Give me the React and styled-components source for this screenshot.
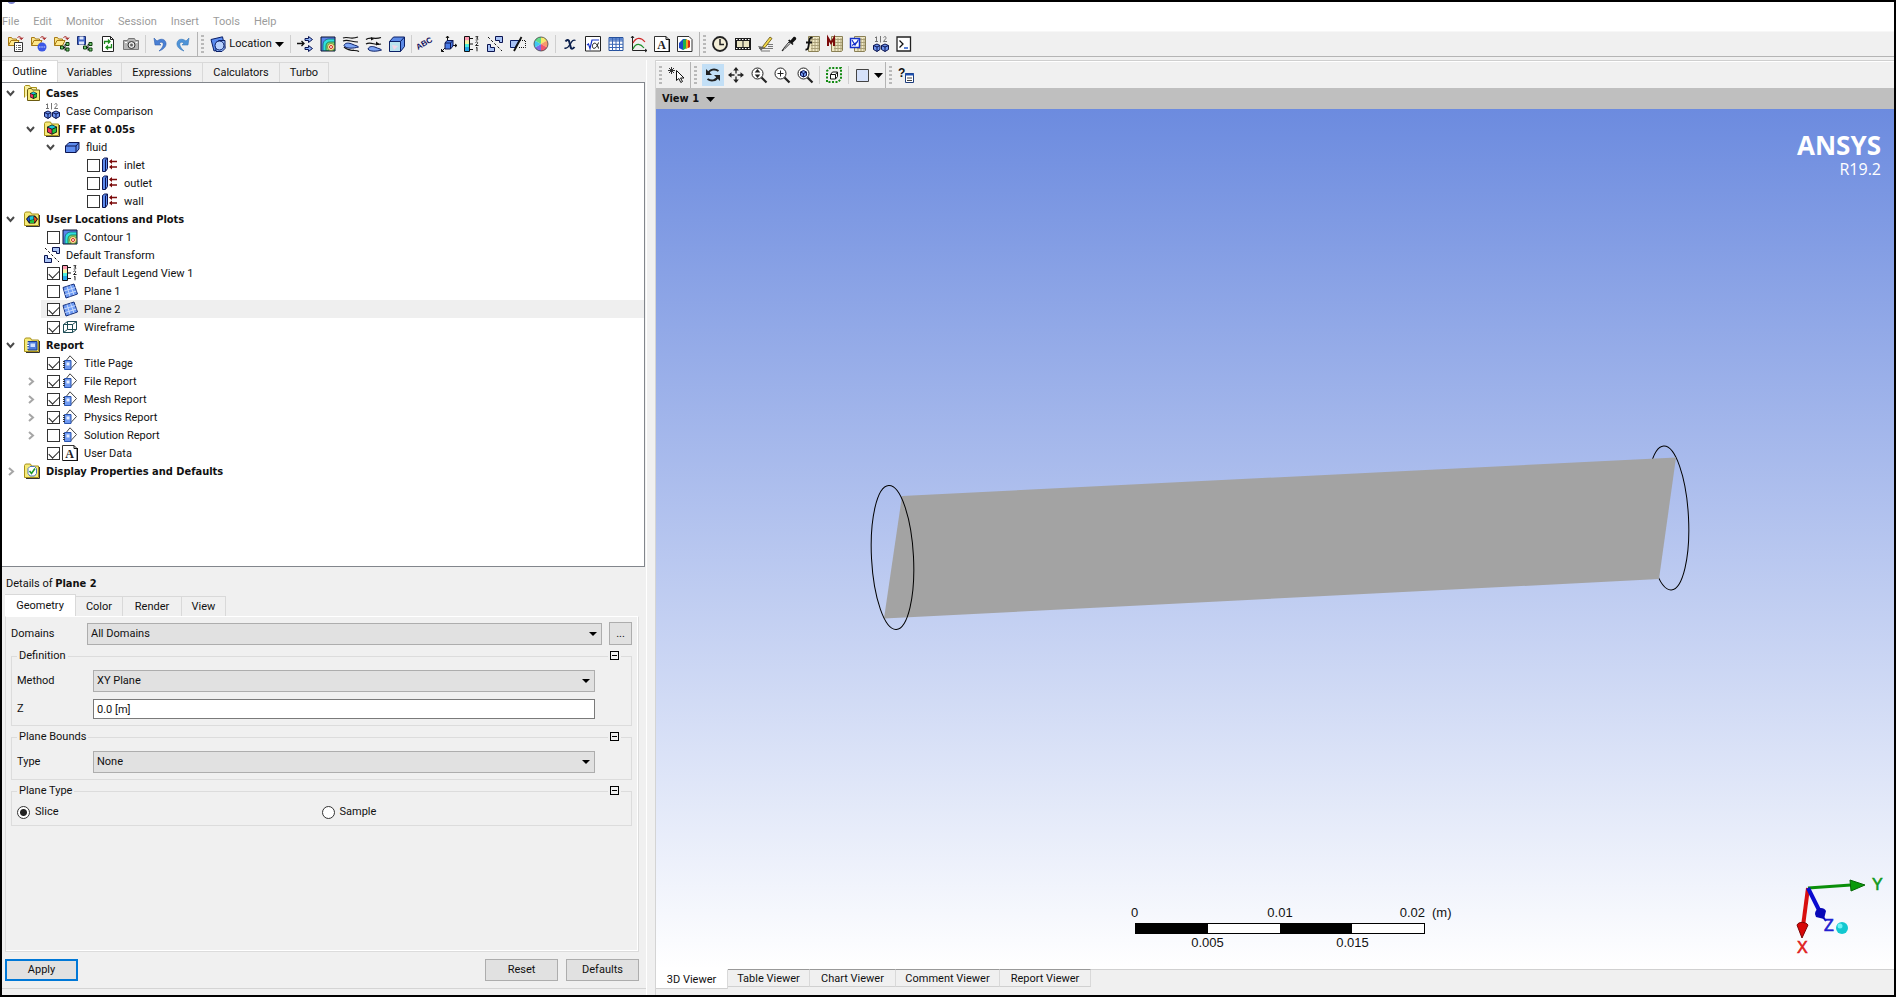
import React, { useState } from "react"
import styled, { createGlobalStyle, css } from "styled-components"

const GlobalStyle = createGlobalStyle`
  * {
    box-sizing: border-box;
  }
  body {
    margin: 0;
    font-family: Roboto, "Noto Sans", sans-serif;
    font-size: 11px;
    line-height: 16px;
    color: #111;
  }
  button, input, select {
    font: inherit;
    color: inherit;
    margin: 0;
  }
  svg {
    display: block;
    flex: none;
    overflow: visible;
  }
`

const bold = css`
  font-family: "DejaVu Sans Condensed", "DejaVu Sans", sans-serif;
  font-weight: bold;
`

const Window = styled.div`
  height: 100vh;
  min-height: 900px;
  display: flex;
  flex-direction: column;
  border: 2px solid #000;
  background: #f0f0f0;
  overflow: hidden;
`

const MenuBar = styled.nav`
  flex: none;
  height: 29px;
  display: flex;
  align-items: center;
  gap: 14px;
  padding-top: 10px;
  background: #fff;
  position: relative;
`

const TitleIcon = styled.span`
  position: absolute;
  left: 5px;
  top: -7px;
  width: 9px;
  height: 9px;
  border-radius: 50%;
  background: #7f86cf;
`

const MenuItem = styled.button`
  border: 0;
  padding: 0;
  background: none;
  color: #9c9c9c;
`

const ToolBar = styled.div`
  flex: none;
  display: flex;
  height: 26px;
  border-top: 1px solid #f7f7f7;
  border-bottom: 1px solid #b4b4b4;
`

const ViewToolBar = styled(ToolBar)`
  height: 27px;
  border-top: 1px solid #fff;
  border-bottom: 0;
`

const ToolGroup = styled.div`
  display: flex;
  align-items: center;
  gap: 7px;
  padding: 0 ${props => (props.$tail === undefined ? 6 : props.$tail)}px 0
    ${props => (props.$lead === undefined ? 6 : props.$lead)}px;
`

const Grip = styled.span`
  flex: none;
  align-self: center;
  width: 3px;
  height: 18px;
  margin-left: 3px;
  background: repeating-linear-gradient(#b9b9b9 0 2px, #f0f0f0 2px 4px);
`

const GroupEnd = styled.span`
  flex: none;
  width: 1px;
  background: #b4b4b4;
`

const Separator = styled.span`
  width: 1px;
  height: 18px;
  margin: 0 -1px;
  background: #cfcfcf;
`

const ToolButton = styled.button`
  display: flex;
  align-items: center;
  gap: 3px;
  height: 22px;
  padding: 0 ${props => (props.$active ? 3 : 0)}px;
  margin: 0 ${props => (props.$active ? -3 : 0)}px;
  border: 0;
  background: ${props => (props.$active ? "#c2dff6" : "none")};
  white-space: nowrap;
`

const LocationButton = styled(ToolButton)`
  width: 74px;
  justify-content: space-between;
`

const Main = styled.div`
  flex: 1;
  min-height: 0;
  display: flex;
  padding-top: 3px;
`

const SidePanel = styled.div`
  flex: 0 0 645px;
  display: flex;
  flex-direction: column;
  border-right: 1px solid #fff;
`

const Splitter = styled.div`
  flex: 0 0 9px;
  border-right: 1px solid #d4d4d4;
`

const Tabs = styled.div`
  flex: none;
  display: flex;
  align-items: flex-end;
`

const Tab = styled.button`
  width: ${props => props.$w}px;
  height: ${props => (props.$active ? 22 : 20)}px;
  padding: 0;
  border: 0;
  border-top: 1px solid #d9d9d9;
  border-right: 1px solid #d9d9d9;
  background: ${props => (props.$active ? "#fff" : "#f0f0f0")};
`

const ViewerTab = styled(Tab)`
  height: ${props => (props.$active ? 20 : 18)}px;
  padding-top: 2px;
  line-height: 14px;
  border-top: 1px solid ${props => (props.$active ? "#fff" : "#999")};
  border-bottom: 1px solid #d0d0d0;
`

const Tree = styled.ul`
  flex: 1;
  min-height: 0;
  margin: 0 1px 0 0;
  padding: 1px 0 0;
  list-style: none;
  overflow: hidden;
  background: #fff;
  border: 1px solid #82868c;
  border-left: 0;
`

const TreeRow = styled.li`
  display: flex;
  height: 18px;
  padding-left: ${props => props.$level * 20}px;
`

const Toggle = styled.button`
  flex: none;
  width: 19px;
  padding: 0 0 0 4px;
  border: 0;
  background: none;
`

const ToggleSpace = styled.span`
  flex: none;
  width: 19px;
`

const RowBody = styled.span`
  flex: 1;
  display: flex;
  align-items: center;
  gap: 6px;
  padding-left: 3px;
  line-height: 18px;
  white-space: nowrap;
  background: ${props => (props.$selected ? "#efefef" : "none")};
  ${props => props.$bold && bold}
`

const RowText = styled.span`
  padding-top: 1px;
`

const CheckBox = styled.input`
  appearance: none;
  flex: none;
  position: relative;
  width: 13px;
  height: 13px;
  margin: 0 -4px 0 3px;
  border: 1px solid #333;
  background: #fff;
  &:checked::after {
    content: "";
    position: absolute;
    left: 1px;
    top: 2px;
    width: 9px;
    height: 5px;
    border-left: 1px solid #222;
    border-bottom: 1px solid #222;
    transform: rotate(-45deg);
  }
`

const Details = styled.section`
  flex: 0 0 428px;
  display: flex;
  flex-direction: column;
  padding: 7px 7px 0 3px;
`

const DetailsTitle = styled.h2`
  margin: 0 0 2px;
  padding: 2px 1px 0;
  font-size: 11px;
  font-weight: normal;
  line-height: 16px;
  strong {
    ${bold}
  }
`

const Pane = styled.div`
  flex: 1;
  display: flex;
  flex-direction: column;
  gap: 3px;
  padding: 5px 6px 0 5px;
  border: 1px solid #dcdcdc;
  border-top-color: #fff;
  box-shadow: inset -1px 0 #fff, inset 0 -1px #fff;
`

const Field = styled.div`
  display: flex;
  align-items: center;
  padding-right: ${props => (props.$inset ? 31 : 0)}px;
  & + & {
    margin-top: 7px;
  }
`

const FieldLabel = styled.label`
  flex: 0 0 76px;
`

const SelectBox = styled.div`
  flex: 1;
  position: relative;
  height: 22px;
`

const Select = styled.select`
  appearance: none;
  width: 100%;
  height: 100%;
  padding: 0 3px;
  border: 1px solid #adadad;
  border-radius: 0;
  background: #e1e1e1;
`

const SelectArrow = styled.span`
  position: absolute;
  right: 5px;
  top: 9px;
  border: 4px solid transparent;
  border-top-color: #000;
  border-bottom: 0;
  pointer-events: none;
`

const TextInput = styled.input`
  flex: 1;
  height: 20px;
  padding: 0 3px;
  border: 1px solid #7a7a7a;
  background: #fff;
`

const MoreButton = styled.button`
  width: 23px;
  height: 23px;
  margin-left: 7px;
  padding: 0;
  border: 1px solid #adadad;
  background: #e1e1e1;
`

const Group = styled.fieldset`
  position: relative;
  min-width: 0;
  margin: 0;
  padding: 6px 5px;
  border: 1px solid #dcdcdc;
`

const Legend = styled.legend`
  height: 16px;
  padding: 0 2px;
`

const Collapse = styled.button`
  position: absolute;
  right: 12px;
  top: -13px;
  width: 9px;
  height: 9px;
  padding: 0;
  border: 1px solid #000;
  background: linear-gradient(#000, #000) center / 5px 1px no-repeat #f0f0f0;
  outline: 2px solid #f0f0f0;
`

const RadioRow = styled.div`
  display: grid;
  grid-template-columns: 1fr 1fr;
  line-height: 14px;
`

const RadioLabel = styled.label`
  display: flex;
  align-items: center;
  gap: 5px;
`

const Radio = styled.input`
  appearance: none;
  width: 13px;
  height: 13px;
  border: 1px solid #333;
  border-radius: 50%;
  background: #fff;
  &:checked {
    background: radial-gradient(#222 0 3px, #fff 4px);
  }
`

const ButtonRow = styled.div`
  flex: none;
  display: flex;
  gap: 8px;
  margin-top: 7px;
`

const PushButton = styled.button`
  width: 73px;
  height: 22px;
  padding: 0;
  background: #e1e1e1;
  border: ${props => (props.$primary ? "2px solid #0078d7" : "1px solid #adadad")};
  margin-right: ${props => (props.$primary ? "auto" : "0")};
`

const PanelFoot = styled.div`
  flex: none;
  height: 7px;
  margin: 7px -7px 0 -3px;
  border-top: 1px solid #d4d4d4;
`

const ViewPanel = styled.div`
  flex: 1;
  min-width: 0;
  display: flex;
  flex-direction: column;
  border-top: 1px solid #cfcfcf;
`

const ViewHeader = styled.div`
  flex: none;
  display: flex;
  align-items: center;
  gap: 7px;
  height: 21px;
  padding: 1px 0 0 6px;
  background: #bfbfbf;
  ${bold}
`

const Viewport = styled.div`
  flex: 1;
  min-height: 0;
  position: relative;
  background: linear-gradient(#6c8bdf, #fff);
`

const Scene = styled.svg`
  width: 100%;
  height: 100%;
`

const Brand = styled.div`
  position: absolute;
  right: 13px;
  top: 21px;
  display: flex;
  flex-direction: column;
  align-items: flex-end;
  color: #fff;
  font-family: "Open Sans", sans-serif;
`

const BrandName = styled.span`
  font-size: 26px;
  line-height: 30px;
  font-weight: 700;
`

const BrandRelease = styled.span`
  font-size: 16px;
  line-height: 18px;
`

const Ruler = styled.div`
  position: absolute;
  left: 50%;
  bottom: 18px;
  width: 290px;
  margin-left: -140px;
  font-family: "Liberation Sans", Arial, sans-serif;
  font-size: 13px;
  line-height: 16px;
`

const TopMarks = styled.div`
  display: grid;
  grid-template-columns: 1fr auto 1fr;
  padding-bottom: 2px;
  span:first-child {
    margin-left: -4px;
  }
  span:last-child {
    text-align: right;
  }
`

const BottomMarks = styled.div`
  display: grid;
  grid-template-columns: 1fr 1fr;
  padding-top: 1px;
  text-align: center;
`

const RulerBar = styled.div`
  display: grid;
  grid-template-columns: repeat(4, 1fr);
  height: 11px;
  border: 1px solid #000;
`

const RulerCell = styled.span`
  background: ${props => (props.$dark ? "#000" : "#fff")};
`

const RulerUnit = styled.span`
  position: absolute;
  left: 297px;
  top: 0;
`

const Triad = styled.svg`
  position: absolute;
  right: 7px;
  bottom: 13px;
`

const ViewerFoot = styled.div`
  flex: none;
  display: flex;
  align-items: flex-start;
  height: 26px;
  box-shadow: inset 0 1px #d0d0d0;
`

const Caret = () => (
  <svg width="9" height="5" viewBox="0 0 9 5">
    <path d="M0 0h9L4.500 5z" fill="#000" />
  </svg>
)

const Chevron = ({ open }) => (
  <svg width="9" height="9" viewBox="0 0 9 9" fill="none" strokeWidth="2">
    {open ? (
      <path d="M1 2l3.500 4L8 2" stroke="#4a4a4a" />
    ) : (
      <path d="M3 1l4 3.500L3 8" stroke="#a6a6a6" />
    )}
  </svg>
)

// shared pieces of the 16px glyphs
const openFolder = (
  <>
    <path d="M.5 9.500v-8h3l1 1.500h4v2" fill="#fbe58a" stroke="#a87a14" />
    <path d="M.5 9.500l2.500-5h8l-2.500 5z" fill="#ffe98c" stroke="#a87a14" />
    <path d="M9.500 1.500c2-1.500 3.500-1 4 1.500M11.500 2l2 1.500L15 1.500" fill="none" stroke="#a01010" />
  </>
)
const nodes = (
  <>
    <path d="M9 11.500h2M11 8.500v6M11 8.500h1M11 13.500h1" stroke="#111" fill="none" />
    <path d="M6.500 10h3v3h-3zM12 6.500h3v3h-3zM12 12h3v3h-3z" fill="#6fc36f" stroke="#0d3d0d" />
  </>
)
const yellowFolder = (
  <>
    <path d="M2 15.500h13.500V4" stroke="#333" fill="none" />
    <path d="M.5 14.500v-12l1-1.500h5l1 2h7v11.500z" fill="#f5ea78" stroke="#a89118" />
  </>
)
const cube = (
  <>
    <path d="M8 3.500l5 2.300v5.400L8 13.800l-5-2.600V5.800z" fill="#111" />
    <path d="M8 4.300l4 1.700L8 7.800 4 6z" fill="#1cc9d6" />
    <path d="M3.700 6.700L7.600 8.500v4.200L3.700 10.800z" fill="#f0305e" />
    <path d="M12.300 6.700L8.400 8.500v4.200l3.900-1.900z" fill="#22c03c" />
  </>
)
const compare = (
  <>
    <path d="M.5 9.500L4 8l3 1.500v4L4 15.500l-3.500-2zM8.500 9.500L12 8l3.500 1.500v4L12 15.500l-3.500-2z" fill="#6d93ee" stroke="#0b1450" />
    <path d="M.5 9.500L4 11l3-1.500M4 11v4.500M8.500 9.500L12 11l3.500-1.500M12 11v4.500" stroke="#0b1450" fill="none" />
    <path d="M3.500.5v5M2 1.500h1.500M2 5.500h3M7.500 0v6.500M10.500 1.500c1-1.500 3-1 2.500.8L10.500 5.500h3.500" stroke="#666" fill="none" strokeWidth=".9" />
  </>
)
const gridSheet = (
  <>
    <path d="M4.500.5h11v14l-1 1h-10z" fill="#efe8c4" stroke="#8a8055" />
    <path d="M7 3.500h8M7 6.500h8M7 9.500h8M7 12.500h8M8 2v13M11 2v13M14 2v13" stroke="#aaa078" />
  </>
)
const magnifier = (
  <>
    <circle cx="6.500" cy="6.500" r="5.500" fill="#fff" stroke="#222" />
    <path d="M10.500 10.500l5 5" stroke="#222" strokeWidth="2.200" />
  </>
)
const contour = (
  <>
    <path d="M1 1h14v14H1z" fill="#5a84ea" stroke="#0a1030" />
    <path d="M3 14.500V9c0-4 3-6 6-6h5.500v11.500z" fill="#2fe0dc" stroke="#0a4050" strokeWidth=".6" />
    <path d="M6 14.500V10c0-3 2-4 4-4h4.500v8.500z" fill="#7ce07a" stroke="#0a4020" strokeWidth=".6" />
    <circle cx="11" cy="11" r="3.500" fill="#fdf3a0" stroke="#665010" strokeWidth=".6" />
    <circle cx="11" cy="11" r="1.500" fill="#fff" stroke="#d02020" />
  </>
)
const legend = (
  <>
    <path d="M1 1h4v3.500H1z" fill="#ff9ab0" />
    <path d="M1 4.500h4V8H1z" fill="#f4f3a0" />
    <path d="M1 8h4v3H1z" fill="#4df0e0" />
    <path d="M1 11h4v4H1z" fill="#26a6e8" />
    <path d="M.5.5h5v15h-5zM6 2.500h3M6 8h3M6 13.500h3" fill="none" stroke="#111" />
    <path d="M11.500.7h2.500L12.700 2.300c2 0 1.700 2.200-1 1.700M11.500 6.500c1-1.200 2.800-.3 2 1L11.500 9.500h3M12 12l1-.7v4" fill="none" stroke="#222" />
  </>
)
const transform = (
  <>
    <path d="M8.500.5h7v6h-3v-2h-4z" fill="#a9c3f5" stroke="#0b1450" />
    <path d="M.5 8.500h3v3h4v4h-7z" fill="#a9c3f5" stroke="#0b1450" />
    <path d="M1 1l14 14" stroke="#111" strokeDasharray="2.500 2" />
  </>
)
const textSheet = (
  <>
    <path d="M.5.500h11.500l3 3v12H.5z" fill="#fff" stroke="#333" />
    <path d="M12 .5v3h3M15.500 3v13M1 15.500h14" stroke="#111" fill="none" />
    <text x="7.500" y="12.500" fontSize="12" fontWeight="bold" textAnchor="middle" fontFamily="Liberation Serif, serif" fill="#222">A</text>
  </>
)
const plane = (
  <>
    <path d="M1 4.500L12 1l3.500 10L4 15z" fill="#6f9cf4" stroke="#16307c" />
    <path d="M2 8l11.500-3.500M3 11.500L14.500 8M5 3.500L8 13.500M8.500 2.300L12 12" stroke="#dbe7ff" strokeWidth=".8" />
  </>
)
const boundary = (
  <>
    <path d="M.5 2.500L2.500 1h3v10.500L3.500 14.500h-3z" fill="#5e8cee" stroke="#0b1450" />
    <path d="M3.500 3v11M3.500 3l2-2" stroke="#0b1450" fill="none" />
    <path d="M8 4.500h7M8 10h7" stroke="#7c0a0a" strokeWidth="1.400" />
    <path d="M7 4.500l3-2.500v5zM7 10l3-2.500v5z" fill="#7c0a0a" />
  </>
)
const reportPage = (
  <>
    <path d="M8 .8L14.500 7.500 8.500 14 3 7z" fill="#fff" stroke="#444" />
    <path d="M2.500 5.500h6.500v9H2.500z" fill="#6f9af2" stroke="#2a55b0" />
    <path d="M4.500 7.500h3v3h-3z" fill="#e6eeff" />
    <path d="M1 6.500h2M1 8.500h2M1 10.500h2M1 12.500h2" stroke="#333" />
  </>
)

const glyphs = {
  openDoc: (
    <>
      {openFolder}
      <path d="M6.500 6.500h8v9h-8z" fill="#fff" stroke="#333" />
      <path d="M8 9.500h5M8 11.500h5M8 13.500h5" stroke="#666" strokeDasharray="1 1 3" />
    </>
  ),
  openState: (
    <>
      {openFolder}
      <circle cx="11" cy="11" r="4.500" fill="#3b57e6" />
      <path d="M8 11h1.500M10.300 11h1.500M12.600 11h1.500" stroke="#cdd6ff" />
    </>
  ),
  openTree: <>{openFolder}{nodes}</>,
  saveTree: (
    <>
      <path d="M.5.5h8v8h-8z" fill="#4468c8" stroke="#1c2f73" />
      <path d="M2.500.5h4v3h-4zM2 5.500h5v3H2z" fill="#dfe7fb" />
      {nodes}
    </>
  ),
  refresh: (
    <>
      <path d="M2.500.5h8l3 3v12h-11z" fill="#fff" stroke="#222" />
      <path d="M10.500.5v3h3" fill="none" stroke="#222" />
      <path d="M4.500 8V5.500h5M8 3.500l2 2-2 2M11.500 8v3.500h-5M8 9.500l-2 2 2 2" fill="none" stroke="#1b8a1b" strokeWidth="1.300" />
    </>
  ),
  camera: (
    <>
      <path d="M.5 4.500h4l1-2h6l1 2h3v9H.5z" fill="#b5b5b5" stroke="#777" />
      <circle cx="8.500" cy="9" r="3.500" fill="#e9e9e9" stroke="#333" />
      <circle cx="8.500" cy="9" r="1.500" fill="#666" />
      <path d="M2 6.500h2M12.500 6.500h2" stroke="#fff" />
    </>
  ),
  undo: <path d="M2 2l1 7h6L7 7c3-2 5 0 4 2.500-.5 2-2 3.500-4 5.500 5-1.500 7.500-5 7-8-.7-4-5-5-9-2z" fill="#4a80d4" stroke="#2f5fb0" strokeWidth=".6" />,
  redo: <path d="M14 2l-1 7H7l2-2C6 5 4 7 5 9.500c.5 2 2 3.500 4 5.500-5-1.500-7.500-5-7-8 .7-4 5-5 9-2z" fill="#4f94d8" stroke="#3a78bb" strokeWidth=".6" />,
  location: (
    <>
      <path d="M1 3.500L12.500.8l2.500 11L4 15z" fill="#5a8bf0" stroke="#0b1f66" />
      <path d="M6 6.500l3-2h6v8l-3 3H6z" fill="#8fb4fa" stroke="#0b1f66" />
      <circle cx="9.500" cy="9.500" r="4.500" fill="#b9d2ff" stroke="#0b1f66" />
    </>
  ),
  vector: (
    <>
      <path d="M0 7.500h7M4.500 5l2.500 2.500L4.500 10" fill="none" stroke="#111" strokeWidth="1.300" />
      <path d="M8 2.500h3.500V.5l4 3-4 3v-2H8zM8 11.500h3.500v-2l4 3-4 3v-2H8z" fill="#8fb4fa" stroke="#0b1450" />
    </>
  ),
  contour,
  streamline: (
    <>
      <path d="M0 2c5-2 7 2 15-1M0 5c5-2 8 1 15 1M6 13.500c4 2 7 0 10 2M1 11c2 2 7 4 10 3" fill="none" stroke="#111" strokeWidth="1.200" />
      <path d="M1 9.500C2 6.500 6 6.500 10 8.500c2 1 4 1 5.500 2.500-5 1.500-13 2-14.500-1.500z" fill="#7ea6f5" stroke="#0b1f66" />
    </>
  ),
  particle: (
    <>
      <path d="M0 3.500C4 0 8 4 15 1.500M0 8c5-3 9 2 15 0" fill="none" stroke="#111" strokeWidth="1.200" />
      <path d="M5 1l3 2-3 1.500zM10 5.500L13.500 8 10 9.500z" fill="#111" />
      <path d="M2 13c1-3 5-3 8-1.500 2 1 4 1 5.500 2.500-4 1.500-12 2-13.500-1z" fill="#7ea6f5" stroke="#0b1f66" />
    </>
  ),
  volume: (
    <>
      <path d="M.5 5.500l4-4.500h11v9.500l-4 5H.5z" fill="#5c8ae6" stroke="#0b1f66" />
      <path d="M1 6h10v9H1z" fill="#b9e2ee" />
      <path d="M3 9l6 1-4 4z" fill="#f4d6e6" />
      <path d="M11.500 15.500v-10h-11M11.500 5.500l4-4.500" stroke="#0b1f66" fill="none" />
    </>
  ),
  label: (
    <text x="0" y="14" fontSize="8" fontWeight="bold" fontFamily="Liberation Sans, sans-serif" fill="#10105c" transform="rotate(-30 0 14)">ABC</text>
  ),
  coord: (
    <>
      <path d="M6.500 0v5M5 2L6.500 0 8 2M11 9.500h5M14 8l2 1.500-2 1.500M5 11l-4.500 4.500M.5 13v2.500H3" fill="none" stroke="#111" />
      <path d="M4 7l2-2.500h6V10l-2.500 3H4z" fill="#4a7be6" stroke="#0b1450" />
      <path d="M4 7h5.500v6M9.500 7L12 4.500" stroke="#0b1450" fill="none" />
    </>
  ),
  legend,
  transform,
  clip: (
    <>
      <path d="M.5 4.500H9L5 11.500H.5z" fill="#a9c3f5" stroke="#0b1f66" />
      <path d="M10 4.500h5.500v7H8" fill="none" stroke="#111" strokeDasharray="1 1" />
      <path d="M11.500 1L4 15" stroke="#111" strokeWidth="1.800" />
    </>
  ),
  colors: (
    <>
      <path d="M8 8V1a7 7 0 0 1 6 3.500z" fill="#f6e96b" />
      <path d="M8 8l6-3.500a7 7 0 0 1 0 7z" fill="#f79a6a" />
      <path d="M8 8l6 3.500A7 7 0 0 1 8 15z" fill="#f0556c" />
      <path d="M8 8v7a7 7 0 0 1-6-3.500z" fill="#7d6be8" />
      <path d="M8 8l-6 3.500a7 7 0 0 1 0-7z" fill="#3fc9f0" />
      <path d="M8 8L2 4.500A7 7 0 0 1 8 1z" fill="#5fdc8c" />
      <circle cx="8" cy="8" r="7" fill="none" stroke="#444" strokeWidth=".8" />
    </>
  ),
  variable: (
    <>
      <path d="M3.500 5.500C5 3 7 3.500 7.500 6.500l1 4c.5 3 2.500 2.500 4 .5" fill="none" stroke="#0b1f4c" strokeWidth="2" />
      <path d="M13.500 4.500C11 3 9.500 6 8 8.500s-3 4.500-5.500 3.500" fill="none" stroke="#0b1f4c" strokeWidth="1.400" />
    </>
  ),
  expression: (
    <>
      <path d="M.5.500h15v14.500H.5z" fill="#fff" stroke="#222" />
      <path d="M2 9l1.500-1L5 12.500 7 4h7" fill="none" stroke="#1430c8" strokeWidth="1.200" />
      <path d="M13.500 6.500C11 14 7 13.500 7.500 9.500 8 6 12 6 13.500 12.500" fill="none" stroke="#111" />
    </>
  ),
  table: (
    <>
      <path d="M1 1.500h14v13H1z" fill="#fff" stroke="#25509c" />
      <path d="M1 2h14v2.500H1z" fill="#5d86cf" />
      <path d="M1 5h14M1 8.300h14M1 11.500h14M4.500 2v12.500M8 2v12.500M11.500 2v12.500" stroke="#3a67b5" />
    </>
  ),
  chart: (
    <>
      <path d="M1.500 0v14.500H16M0 2l1.500-2L3 2M14 13l2 1.500L14 16" fill="none" stroke="#222" />
      <path d="M2 7c3-6 8-6 12-1" fill="none" stroke="#d02828" strokeWidth="1.200" />
      <path d="M2 13c3-7 8-5 11-1" fill="none" stroke="#20902c" strokeWidth="1.200" />
    </>
  ),
  textSheet,
  figure: (
    <>
      <path d="M.5.500h11.500l3 3v12H.5z" fill="#fff" stroke="#333" />
      <path d="M2 7l4-4h3v8l-3 3-4-2z" fill="#1c49c8" />
      <path d="M6 4l4-1v9l-4 2z" fill="#1fb34c" />
      <path d="M9 3l4 2v6l-4 2z" fill="#f1a11c" />
      <path d="M11 4l2 1v6l-2 1z" fill="#d8261c" />
    </>
  ),
  clock: (
    <>
      <circle cx="8" cy="8" r="7" fill="#f4efd8" stroke="#222" strokeWidth="1.800" />
      <path d="M8 3v5.500h4" fill="none" stroke="#222" strokeWidth="1.500" />
    </>
  ),
  film: (
    <>
      <path d="M0 2h16v12H0z" fill="#1c1c1c" />
      <path d="M2 5h5.500v6H2zM8.500 5H14v6H8.500z" fill="#e9e4c2" />
      <path d="M1 3.500h14M1 12.500h14" stroke="#fff" strokeDasharray="1.500 1.500" />
    </>
  ),
  quick: (
    <>
      <path d="M1 12.500h14M3 15h9M9 8.500h6M10 10.500h5" stroke="#777" />
      <path d="M5 10l7-9 2 1.500-7 9-3 1z" fill="#f3d94a" stroke="#5c4a10" strokeWidth=".8" />
      <path d="M0 10l6 1-3 4z" fill="#666" />
    </>
  ),
  probe: (
    <>
      <path d="M9 7.500L3 13.500 1 15l1.500-2.500L8 6z" fill="#fff" stroke="#222" />
      <path d="M7 4.500l4.500 4.500 1-1-1-1L15 3.500c1-1.500-1-3.500-2.500-2.500L9.500 4.500l-1-1z" fill="#111" />
    </>
  ),
  calcF: (
    <>
      {gridSheet}
      <path d="M8.500 2C6 .5 5.500 3 5 7s-.8 7-3.500 6.500M2 6.500h6" fill="none" stroke="#111" strokeWidth="1.800" />
    </>
  ),
  calcM: (
    <>
      {gridSheet}
      <path d="M1 10V2l3 5 3-5v8" fill="none" stroke="#7c0a0a" strokeWidth="2" />
    </>
  ),
  calcCheck: (
    <>
      {gridSheet}
      <path d="M.5 2.500h9v9h-9z" fill="#fff" stroke="#1430c8" strokeWidth="1.500" />
      <path d="M2 4l3 5 3.500-5.500M2 9.500l6-4" fill="none" stroke="#1430c8" strokeWidth="1.200" />
    </>
  ),
  compare,
  terminal: (
    <>
      <path d="M1 1h13.500v14H1z" fill="#fff" stroke="#222" strokeWidth="1.300" />
      <path d="M3.500 4.500L7 8l-3.500 3.500" fill="none" stroke="#111" strokeWidth="1.300" />
      <path d="M8 12h4" stroke="#2458c8" strokeWidth="1.500" />
    </>
  ),
  pick: (
    <>
      <path d="M3.500 0v7M0 3.500h7M1 1l5 5M6 1L1 6" stroke="#333" />
      <path d="M8.500 3.500v10l2.300-2 2 4 1.700-1-2-3.500h3.500z" fill="#fff" stroke="#111" />
    </>
  ),
  rotate: (
    <>
      <path d="M3 6.500C5 2 10 1.500 13.500 4" fill="none" stroke="#222" strokeWidth="2" />
      <path d="M1 2v6h6z" fill="#222" />
      <path d="M13 9.500c-2 4.500-7 5-10.500 2.500" fill="none" stroke="#222" strokeWidth="2" />
      <path d="M15 14V8H9z" fill="#222" />
    </>
  ),
  pan: (
    <>
      <path d="M8 3v3.500M8 9.500V13M3 8h3.500M9.500 8H13" stroke="#222" strokeWidth="1.300" />
      <path d="M8 0l2.800 3.500H5.200zM8 16l2.800-3.500H5.200zM0 8l3.500-2.800v5.600zM16 8l-3.500-2.800v5.600z" fill="#222" />
    </>
  ),
  zoom: <>{magnifier}<path d="M6.500 2l2.800 3.500H3.700zM6.500 11l2.800-3.500H3.700z" fill="#222" /></>,
  zoomIn: <>{magnifier}<path d="M6.500 3.500v6M3.500 6.500h6" stroke="#222" /></>,
  zoomFit: (
    <>
      {magnifier}
      <path d="M3.500 5l3-1.500L9.500 5v3.500l-3 1.500-3-1.500z" fill="#6f96f0" stroke="#0b1450" />
      <path d="M3.500 5l3 1.500L9.500 5M6.500 6.500V10" stroke="#0b1450" fill="none" />
    </>
  ),
  highlight: (
    <>
      <path d="M1 15V4l3-3h11v11l-3 3z" fill="none" stroke="#128a12" strokeWidth="2" strokeDasharray="2 1.500" />
      <path d="M4.500 7.500l2-2.500h5v4.500l-2 2.500h-5zM4.500 7.500h5V12M9.500 7.500l2-2.500" fill="#fff" stroke="#111" />
    </>
  ),
  layout: <path d="M1.500 2.500h12v12h-12z" fill="#d5e1fa" stroke="#444" />,
  help: (
    <>
      <text x="0" y="10" fontSize="12" fontWeight="bold" fontFamily="Liberation Sans, sans-serif" fill="#111">?</text>
      <path d="M7.500 6.500h8v9h-8z" fill="#fff" stroke="#1c3c7c" />
      <path d="M7 7.500h9" stroke="#1c4fae" strokeWidth="2" />
      <path d="M9 11h5M9 13.500h5" stroke="#444" />
    </>
  ),
  cases: (
    <>
      <path d="M.5 12.500v-11l1-1h4l1 2h6v2" fill="#f8f0a0" stroke="#a89118" />
      <path d="M3.500 15.500V5l1-1.500h3l1 1.500h7v10.500z" fill="#f5ea78" stroke="#6b5b10" />
      <path d="M9.500 6.500l3.500 1.700v4L9.500 14 6 12.200v-4z" fill="#111" />
      <path d="M9.500 7l2.700 1.200-2.700 1.300-2.700-1.300z" fill="#1cc9d6" />
      <path d="M6.400 8.800l2.800 1.300v3l-2.800-1.300z" fill="#f0305e" />
      <path d="M12.600 8.800l-2.800 1.300v3l2.800-1.300z" fill="#22c03c" />
    </>
  ),
  caseFolder: <>{yellowFolder}{cube}</>,
  plots: (
    <>
      {yellowFolder}
      <path d="M2 8l3-3.500h6L14 8l-3 4.500H5z" fill="#111" />
      <path d="M3 8l2.500-2.500v6z" fill="#1d56e0" />
      <path d="M5.500 5.500l4-.5v3.500l-3.500.5z" fill="#1cc9d6" />
      <path d="M6 9.500l4-.8v3.300H6z" fill="#22c03c" />
      <path d="M10 5.500L13 8l-2.500 3.500z" fill="#f0501c" />
    </>
  ),
  reportFolder: (
    <>
      {yellowFolder}
      <path d="M4 4.500h9v8.500H4z" fill="#4f7ee0" stroke="#1c3a8c" />
      <path d="M6.500 6.500h4.500v3.500h-4.500z" fill="#cfe0ff" />
      <path d="M3 6h2M3 8.500h2M3 11h2" stroke="#fff" />
    </>
  ),
  displayFolder: (
    <>
      {yellowFolder}
      <path d="M4 5.500l2-2h4.500l2 2v5l-2 2.500H6l-2-2.500z" fill="#fff" stroke="#4c77b8" />
      <path d="M5.500 8l2 2.500L11 5.500" fill="none" stroke="#1a9a2a" strokeWidth="1.600" />
    </>
  ),
  domain: (
    <>
      <path d="M1.500 7l3.500-3.500h10V10l-3 3.500H1.500z" fill="#5e8cee" stroke="#0b1450" />
      <path d="M1.500 7H12v6.500M12 7l3-3.500" stroke="#0b1450" fill="none" />
    </>
  ),
  boundary,
  plane,
  wireframe: <path d="M1.500 5.500h9v8h-9zM5.500 2.500h9v8h-9zM1.500 5.500l4-3M10.500 5.500l4-3M1.500 13.500l4-3M10.500 13.500l4-3" fill="none" stroke="#1c4c54" />,
  reportPage,
}

const Glyph = ({ name }) => (
  <svg width="16" height="16" viewBox="0 0 16 16" aria-hidden="true">
    {glyphs[name]}
  </svg>
)

const menus = ["File", "Edit", "Monitor", "Session", "Insert", "Tools", "Help"]

const fileTools = ["openDoc", "openState", "openTree", "saveTree", "refresh", "camera", "|", "undo", "redo"]
const insertTools = [
  "|", "vector", "contour", "streamline", "particle", "volume",
  "|", "label", "coord", "legend", "transform", "clip", "colors",
  "|", "variable", "expression", "table", "chart", "textSheet", "figure",
]
const extraTools = ["clock", "film", "quick", "probe", "calcF", "calcM", "calcCheck", "compare", "terminal"]
const viewTools = ["rotate", "pan", "zoom", "zoomIn", "zoomFit", "|", "highlight", "|"]

const sideTabs = [
  { text: "Outline", width: 56 },
  { text: "Variables", width: 64 },
  { text: "Expressions", width: 81 },
  { text: "Calculators", width: 77 },
  { text: "Turbo", width: 49 },
]
const detailTabs = [
  { text: "Geometry", width: 71 },
  { text: "Color", width: 47 },
  { text: "Render", width: 59 },
  { text: "View", width: 44 },
]
const viewerTabs = [
  { text: "3D Viewer", width: 72 },
  { text: "Table Viewer", width: 82 },
  { text: "Chart Viewer", width: 86 },
  { text: "Comment Viewer", width: 104 },
  { text: "Report Viewer", width: 91 },
]

const tree = [
  { text: "Cases", icon: "cases", level: 0, open: true, bold: true },
  { text: "Case Comparison", icon: "compare", level: 1 },
  { text: "FFF at 0.05s", icon: "caseFolder", level: 1, open: true, bold: true },
  { text: "fluid", icon: "domain", level: 2, open: true },
  { text: "inlet", icon: "boundary", level: 3, checked: false },
  { text: "outlet", icon: "boundary", level: 3, checked: false },
  { text: "wall", icon: "boundary", level: 3, checked: false },
  { text: "User Locations and Plots", icon: "plots", level: 0, open: true, bold: true },
  { text: "Contour 1", icon: "contour", level: 1, checked: false },
  { text: "Default Transform", icon: "transform", level: 1 },
  { text: "Default Legend View 1", icon: "legend", level: 1, checked: true },
  { text: "Plane 1", icon: "plane", level: 1, checked: false },
  { text: "Plane 2", icon: "plane", level: 1, checked: true, selected: true },
  { text: "Wireframe", icon: "wireframe", level: 1, checked: true },
  { text: "Report", icon: "reportFolder", level: 0, open: true, bold: true },
  { text: "Title Page", icon: "reportPage", level: 1, checked: true },
  { text: "File Report", icon: "reportPage", level: 1, open: false, checked: true },
  { text: "Mesh Report", icon: "reportPage", level: 1, open: false, checked: true },
  { text: "Physics Report", icon: "reportPage", level: 1, open: false, checked: true },
  { text: "Solution Report", icon: "reportPage", level: 1, open: false, checked: false },
  { text: "User Data", icon: "textSheet", level: 1, checked: true },
  { text: "Display Properties and Defaults", icon: "displayFolder", level: 0, open: false, bold: true },
]

const Tools = ({ items, active }) =>
  items.map((name, i) =>
    name === "|" ? (
      <Separator key={i} />
    ) : (
      <ToolButton key={i} aria-label={name} $active={name === active}>
        <Glyph name={name} />
      </ToolButton>
    )
  )

const TabStrip = ({ items, as: Item = Tab }) => {
  const [active, setActive] = useState(0)
  return items.map((item, i) => (
    <Item
      key={item.text}
      role="tab"
      aria-selected={i === active}
      $w={item.width}
      $active={i === active}
      onClick={() => setActive(i)}
    >
      {item.text}
    </Item>
  ))
}

const TreeItem = ({ item }) => (
  <TreeRow $level={item.level}>
    {item.open === undefined ? (
      <ToggleSpace />
    ) : (
      <Toggle aria-label={`Toggle ${item.text}`}>
        <Chevron open={item.open} />
      </Toggle>
    )}
    <RowBody
      as={item.checked === undefined ? "span" : "label"}
      $bold={item.bold}
      $selected={item.selected}
    >
      {item.checked !== undefined && <CheckBox type="checkbox" defaultChecked={item.checked} />}
      <Glyph name={item.icon} />
      <RowText>{item.text}</RowText>
    </RowBody>
  </TreeRow>
)

const Combo = ({ id, value }) => (
  <SelectBox>
    <Select id={id} defaultValue={value}>
      <option>{value}</option>
    </Select>
    <SelectArrow />
  </SelectBox>
)

const DetailsPanel = () => (
  <Details>
    <DetailsTitle>
      Details of <strong>Plane 2</strong>
    </DetailsTitle>
    <Tabs role="tablist">
      <TabStrip items={detailTabs} />
    </Tabs>
    <Pane>
      <Field>
        <FieldLabel htmlFor="domains">Domains</FieldLabel>
        <Combo id="domains" value="All Domains" />
        <MoreButton aria-label="More domains">...</MoreButton>
      </Field>
      <Group>
        <Legend>Definition</Legend>
        <Collapse aria-label="Collapse Definition" />
        <Field $inset>
          <FieldLabel htmlFor="method">Method</FieldLabel>
          <Combo id="method" value="XY Plane" />
        </Field>
        <Field $inset>
          <FieldLabel htmlFor="z">Z</FieldLabel>
          <TextInput id="z" defaultValue="0.0 [m]" />
        </Field>
      </Group>
      <Group>
        <Legend>Plane Bounds</Legend>
        <Collapse aria-label="Collapse Plane Bounds" />
        <Field $inset>
          <FieldLabel htmlFor="type">Type</FieldLabel>
          <Combo id="type" value="None" />
        </Field>
      </Group>
      <Group>
        <Legend>Plane Type</Legend>
        <Collapse aria-label="Collapse Plane Type" />
        <RadioRow>
          <RadioLabel>
            <Radio type="radio" name="planeType" defaultChecked />
            Slice
          </RadioLabel>
          <RadioLabel>
            <Radio type="radio" name="planeType" />
            Sample
          </RadioLabel>
        </RadioRow>
      </Group>
    </Pane>
    <ButtonRow>
      <PushButton $primary>Apply</PushButton>
      <PushButton>Reset</PushButton>
      <PushButton>Defaults</PushButton>
    </ButtonRow>
    <PanelFoot />
  </Details>
)

const PipeScene = () => (
  <Scene viewBox="0 0 1238 860">
    <ellipse cx="1011.500" cy="409" rx="21" ry="72" transform="rotate(-3 1011.500 409)" fill="none" stroke="#000" />
    <path d="M246 387L1020 348.500 1003 470 228 509.500z" fill="#a3a3a3" />
    <ellipse cx="236.500" cy="448.500" rx="21" ry="72" transform="rotate(-3 236.500 448.500)" fill="none" stroke="#000" />
  </Scene>
)

const AxisTriad = () => (
  <Triad width="94" height="80" viewBox="0 0 94 80" fontFamily="Liberation Sans, sans-serif" fontSize="16">
    <path d="M15 12L58 9" stroke="#0a8f0a" strokeWidth="3" />
    <path d="M57 4l15 5-14 6z" fill="#0a9a0a" stroke="#056605" />
    <path d="M15 12L10 50" stroke="#d81010" strokeWidth="4" />
    <path d="M4 49c2-4 9-3 11 0L9 62z" fill="#d80808" stroke="#7c0404" />
    <path d="M15 12L26 34" stroke="#0a0ad0" strokeWidth="4" />
    <path d="M22 38c0-7 9-8 11-3L31 43 23 41z" fill="#0808b8" />
    <path d="M30 41l3 4" stroke="#0808b8" strokeWidth="2" />
    <circle cx="49" cy="52" r="6" fill="#12c8d0" />
    <circle cx="47" cy="50" r="2.500" fill="#6ff4f6" />
    <g strokeWidth=".6">
      <text x="79" y="14" fill="#0f9a1a" stroke="#0f9a1a">Y</text>
      <text x="31" y="55" fill="#2020d0" stroke="#2020d0">Z</text>
      <text x="4" y="77" fill="#e02020" stroke="#e02020">X</text>
    </g>
  </Triad>
)

const App = () => (
  <>
    <GlobalStyle />
    <Window>
      <MenuBar>
        <TitleIcon />
        {menus.map(text => (
          <MenuItem key={text}>{text}</MenuItem>
        ))}
      </MenuBar>
      <ToolBar>
        <ToolGroup>
          <Tools items={fileTools} />
        </ToolGroup>
        <GroupEnd />
        <Grip />
        <ToolGroup>
          <LocationButton>
            <Glyph name="location" />
            Location
            <Caret />
          </LocationButton>
          <Tools items={insertTools} />
        </ToolGroup>
        <GroupEnd />
        <Grip />
        <ToolGroup>
          <Tools items={extraTools} />
        </ToolGroup>
      </ToolBar>
      <Main>
        <SidePanel>
          <Tabs role="tablist">
            <TabStrip items={sideTabs} />
          </Tabs>
          <Tree>
            {tree.map(item => (
              <TreeItem key={item.text} item={item} />
            ))}
          </Tree>
          <DetailsPanel />
        </SidePanel>
        <Splitter />
        <ViewPanel>
          <ViewToolBar>
            <Grip />
            <ToolGroup>
              <Tools items={["pick"]} />
            </ToolGroup>
            <GroupEnd />
            <Grip />
            <ToolGroup $lead={8} $tail={2}>
              <Tools items={viewTools} active="rotate" />
              <ToolButton aria-label="Viewport layout">
                <Glyph name="layout" />
                <Caret />
              </ToolButton>
            </ToolGroup>
            <GroupEnd />
            <Grip />
            <ToolGroup>
              <Tools items={["help"]} />
            </ToolGroup>
          </ViewToolBar>
          <ViewHeader>
            View 1
            <Caret />
          </ViewHeader>
          <Viewport>
            <PipeScene />
            <Brand>
              <BrandName>ANSYS</BrandName>
              <BrandRelease>R19.2</BrandRelease>
            </Brand>
            <Ruler>
              <TopMarks>
                <span>0</span>
                <span>0.01</span>
                <span>0.02</span>
              </TopMarks>
              <RulerUnit>(m)</RulerUnit>
              <RulerBar>
                <RulerCell $dark />
                <RulerCell />
                <RulerCell $dark />
                <RulerCell />
              </RulerBar>
              <BottomMarks>
                <span>0.005</span>
                <span>0.015</span>
              </BottomMarks>
            </Ruler>
            <AxisTriad />
          </Viewport>
          <ViewerFoot role="tablist">
            <TabStrip items={viewerTabs} as={ViewerTab} />
          </ViewerFoot>
        </ViewPanel>
      </Main>
    </Window>
  </>
)

export default App
